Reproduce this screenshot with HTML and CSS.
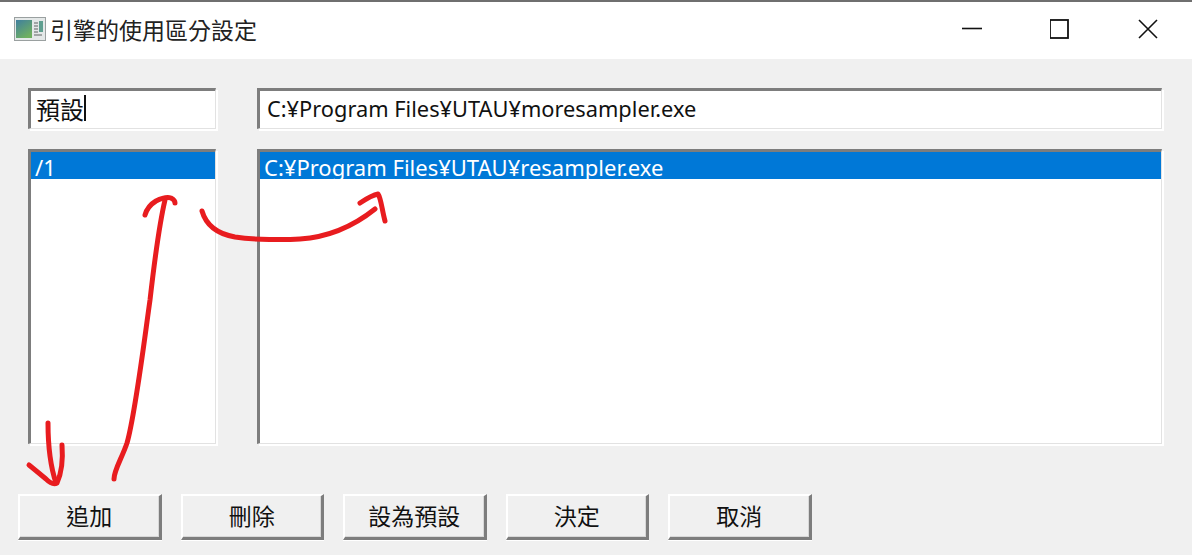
FILE: index.html
```html
<!DOCTYPE html>
<html lang="zh-Hant">
<head>
  <meta charset="UTF-8" />
  <title>引擎的使用區分設定</title>
  <link rel="stylesheet" href="styles.css">
</head>
<body>
  <div class="window">
    <div class="title-bar">
      <svg class="app-icon" width="32" height="24" viewBox="0 0 32 24">
        <defs>
          <linearGradient id="screen" x1="0" y1="0" x2="0.6" y2="1">
            <stop offset="0" stop-color="#3f7f9f" />
            <stop offset="1" stop-color="#6fb060" />
          </linearGradient>
        </defs>
        <rect x="0.5" y="0.5" width="31" height="23" fill="#e4e8e8" stroke="#9aa0a0" />
        <rect x="2" y="3" width="16" height="18" fill="url(#screen)" />
        <path d="M20 6h4M20 9h4M20 12h4M20 15h4M20 18h8" stroke="#8a8f8f" stroke-width="1.5" />
        <rect x="25" y="4" width="4" height="11" fill="#5f9f90" />
      </svg>
      <div class="title-text">引擎的使用區分設定</div>
      <div class="window-buttons">
        <div class="window-btn">
          <svg width="20" height="20" viewBox="0 0 20 20"><path d="M0 9.5h20" stroke="#111" stroke-width="1.6" /></svg>
        </div>
        <div class="window-btn">
          <svg width="20" height="20" viewBox="0 0 20 20"><rect x="0" y="1" width="18" height="18" fill="none" stroke="#111" stroke-width="1.8" /></svg>
        </div>
        <div class="window-btn">
          <svg width="20" height="20" viewBox="0 0 20 20"><path d="M1 1l18 18M19 1L1 19" stroke="#111" stroke-width="1.6" /></svg>
        </div>
      </div>
    </div>

    <div class="content">
      <div class="fields">
        <div class="field name-field">預設<span class="caret"></span></div>
        <div class="field">C:¥Program Files¥UTAU¥moresampler.exe</div>
        <div class="list">
          <div class="list-item">/1</div>
        </div>
        <div class="list">
          <div class="list-item">C:¥Program Files¥UTAU¥resampler.exe</div>
        </div>
      </div>

      <div class="button-row">
        <button>追加</button>
        <button>刪除</button>
        <button>設為預設</button>
        <button>決定</button>
        <button>取消</button>
      </div>
    </div>

    <!-- red marks drawn over the dialog -->
    <svg class="marks" width="1192" height="555" viewBox="0 0 1192 555">
      <path d="M48 423C48 440 49 462 56 483" />
      <path d="M62 445C63 458 62 472 57 483C53 485 50 483 46 479C40 474 34 469 29 465" />
      <path d="M114 479C114 470 122 458 127 443C135 415 143 350 150 300C154 265 158 230 165 200" />
      <path d="M145 215C147 208 151 204 156 201C162 198 168 197 171 198C173 199 175 201 175 203" />
      <path d="M202 211C206 225 218 234 235 237C255 240 285 240 300 239C330 237 355 225 375 209" />
      <path d="M360 203C366 199 372 195 378 194C381 198 382 210 385 221" />
    </svg>
  </div>
</body>
</html>
```

FILE: styles.css
```css
* {
  box-sizing: border-box;
}

body {
  margin: 0;
  font-family: "Noto Sans", "Noto Sans CJK TC", sans-serif;
  background-color: #f0f0f0;
  color: #111;
}

.window {
  position: relative;
  width: 1192px;
  height: 555px;
  overflow: hidden;
}

.title-bar {
  display: flex;
  align-items: center;
  height: 59px;
  padding-left: 14px;
  padding-bottom: 4px;
  background-color: white;
  border-top: 2px solid #6f6f6f;
}

.app-icon {
  flex: none;
}

.title-text {
  margin-left: 4px;
  font-family: "Noto Sans CJK TC", sans-serif;
  font-size: 23px;
  color: #222;
}

.window-buttons {
  display: flex;
  margin-left: auto;
}

.window-btn {
  display: flex;
  align-items: center;
  justify-content: center;
  width: 88px;
  height: 53px;
}

.content {
  padding: 29px 18px 0;
}

.fields {
  display: grid;
  grid-template-columns: 188px 905px;
  grid-template-rows: 41px 295px;
  column-gap: 41px;
  row-gap: 20px;
  margin-left: 10px;
}

.field,
.list {
  background-color: white;
  border-style: solid;
  border-width: 3px 1px 1px 3px;
  border-color: #7d7d7d #e2e2e2 #e2e2e2 #7d7d7d;
  box-shadow: 2px 2px 0 white;
  font-size: 22px;
}

.field {
  display: flex;
  align-items: center;
  padding-left: 7px;
  padding-bottom: 3px;
  font-size: 21.8px;
  white-space: nowrap;
}

.name-field {
  padding-left: 5px;
  font-family: "Noto Sans CJK TC", sans-serif;
  font-size: 24px;
}

.caret {
  width: 2px;
  height: 26px;
  background-color: #111;
}

.list-item {
  height: 27px;
  padding-left: 4px;
  line-height: 30px;
  background-color: #0078d7;
  color: white;
  white-space: nowrap;
}

.button-row {
  display: flex;
  gap: 19px;
  margin-top: 50px;
}

.button-row button {
  width: 143.5px;
  height: 46px;
  padding: 0 0 3px;
  font-family: "Noto Sans CJK TC", sans-serif;
  font-size: 23px;
  color: #111;
  background-color: #f0f0f0;
  border-style: solid;
  border-width: 2px 3px 3px 2px;
  border-color: white #7d7d7d #7d7d7d white;
  box-shadow: inset -1px -1px 0 #d8d8d8, 0 1px 0 white;
}

.marks {
  position: absolute;
  top: 0;
  left: 0;
  fill: none;
  stroke: #e81c1f;
  stroke-width: 5;
  stroke-linecap: round;
  stroke-linejoin: round;
}
```
